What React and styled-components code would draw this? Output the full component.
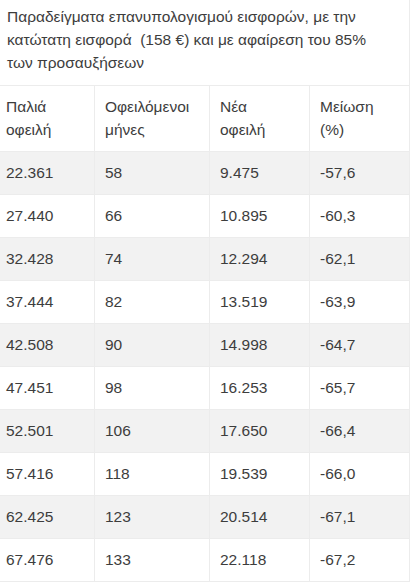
import styled, { createGlobalStyle } from "styled-components";

const rows = [
  ["22.361", "58", "9.475", "-57,6"],
  ["27.440", "66", "10.895", "-60,3"],
  ["32.428", "74", "12.294", "-62,1"],
  ["37.444", "82", "13.519", "-63,9"],
  ["42.508", "90", "14.998", "-64,7"],
  ["47.451", "98", "16.253", "-65,7"],
  ["52.501", "106", "17.650", "-66,4"],
  ["57.416", "118", "19.539", "-66,0"],
  ["62.425", "123", "20.514", "-67,1"],
  ["67.476", "133", "22.118", "-67,2"],
];

const GlobalStyle = createGlobalStyle`
  body {
    margin: 0;
    background: #fff;
    font-family: "Liberation Sans", Arial, sans-serif;
    overflow: hidden;
  }
`;

const App = () => {
  return (
    <Page>
      <GlobalStyle />
      <Table>
        <colgroup>
          <col style={{ width: 99 }} />
          <col style={{ width: 115 }} />
          <col style={{ width: 100 }} />
          <col style={{ width: 100 }} />
        </colgroup>
        <tbody>
          <tr>
            <Caption colSpan={4}>
              Παραδείγματα επανυπολογισμού εισφορών, με την κατώτατη εισφορά&nbsp; (158 €) και με αφαίρεση του 85% των προσαυξήσεων
            </Caption>
          </tr>
          <tr>
            <Cell>Παλιά οφειλή</Cell>
            <Cell>Οφειλόμενοι μήνες</Cell>
            <Cell>Νέα οφειλή</Cell>
            <Cell>Μείωση (%)</Cell>
          </tr>
          {rows.map((r, i) => (
            <Row key={r[0]} $shaded={i % 2 === 0}>
              {r.map((v, j) => (
                <Cell key={j}>{v}</Cell>
              ))}
            </Row>
          ))}
        </tbody>
      </Table>
    </Page>
  );
};

const Page = styled.div`
  width: 411px;
  height: 587px;
  overflow: hidden;
`;

const Table = styled.table`
  margin: -5px 0 0 -5px;
  border-collapse: collapse;
  table-layout: fixed;
  width: 415px;
  color: #3d3d3d;
  font-size: 15.5px;
  line-height: 23px;
`;

const Cell = styled.td`
  border: 1px solid #ececec;
  padding: 9px 14px 10px 10px;
  vertical-align: top;
  text-align: left;
`;

const Caption = styled(Cell)`
  padding: 9px 18px 11px 11px;
`;

const Row = styled.tr`
  background: ${(p) => (p.$shaded ? "#f2f2f2" : "#fff")};
`;

export default App;
